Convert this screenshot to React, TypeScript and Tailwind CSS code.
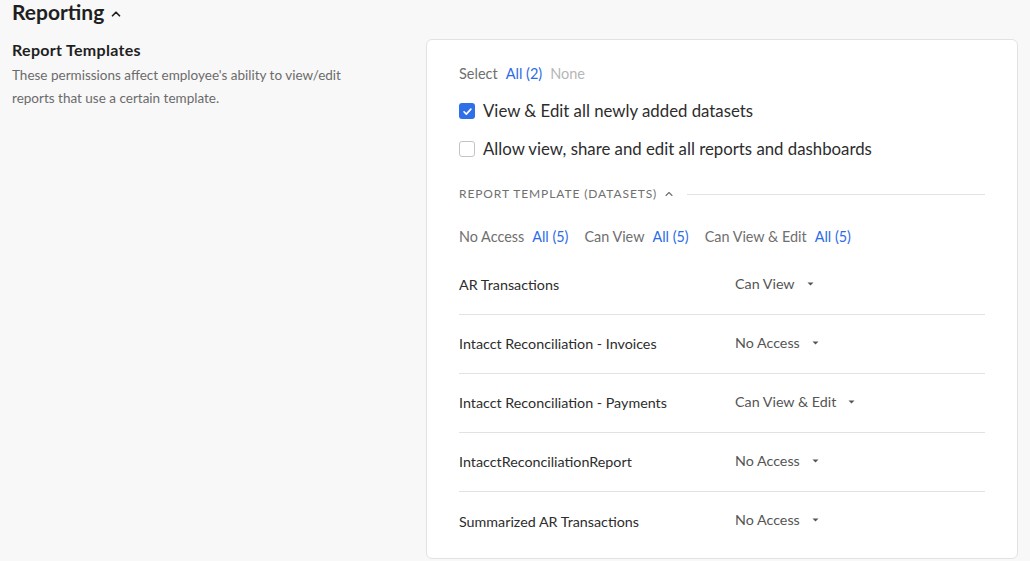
import { ChevronUp } from "lucide-react";

const font = { fontFamily: "Lato, 'Open Sans', sans-serif" };

const rows = [
  { name: "AR Transactions", access: "Can View" },
  { name: "Intacct Reconciliation - Invoices", access: "No Access" },
  { name: "Intacct Reconciliation - Payments", access: "Can View & Edit" },
  { name: "IntacctReconciliationReport", access: "No Access" },
  { name: "Summarized AR Transactions", access: "No Access" },
];

function Checkbox({ checked }: { checked: boolean }) {
  if (checked) {
    return (
      <span className="flex h-4 w-4 items-center justify-center rounded-[3px] bg-[#2f6fe8]">
        <svg width="11" height="11" viewBox="0 0 12 12" fill="none">
          <path d="M2.2 6.3l2.5 2.5 5-5.4" stroke="white" strokeWidth="1.8" strokeLinecap="round" strokeLinejoin="round" />
        </svg>
      </span>
    );
  }
  return <span className="h-4 w-4 rounded-[3px] border border-[#c4c4c4] bg-white" />;
}

function Caret() {
  return (
    <svg width="7" height="4" viewBox="0 0 7 4" className="ml-3">
      <path d="M0.5 0.5h6L3.5 3.5z" fill="#555" />
    </svg>
  );
}

export default function App() {
  return (
    <div className="min-h-[561px] bg-[#f8f8f8] px-3 text-[#2d2d2d]" style={font}>
      {/* Section heading */}
      <div className="flex h-6 items-center gap-[5px]">
        <h1 className="text-[21px] font-bold leading-6 text-[#1f1f1f]">Reporting</h1>
        <ChevronUp size={14} strokeWidth={3} className="mt-1 text-[#1f1f1f]" />
      </div>

      <div className="mt-[15px] flex">
        {/* Left description */}
        <div className="w-[414px] shrink-0 pt-px">
          <h2 className="text-[16px] font-bold leading-5 tracking-[0.3px] text-[#1f1f1f]">Report Templates</h2>
          <p className="mt-1 w-[340px] text-[13.5px] leading-[23px] text-[#6b6b6b]">
            These permissions affect employee's ability to view/edit reports that use a certain template.
          </p>
        </div>

        {/* Card */}
        <div className="flex-1 rounded-md border border-[#e2e2e2] bg-white px-8 pb-[7px] pt-6">
          <div className="flex h-5 items-center gap-2 text-[14.5px]">
            <span className="text-[#6f6f6f]">Select</span>
            <span className="text-[#2c6ce6]">All (2)</span>
            <span className="text-[#b6b6b6]">None</span>
          </div>

          <label className="mt-[15px] flex h-6 items-center gap-2 text-[16.8px]">
            <Checkbox checked />
            <span>View &amp; Edit all newly added datasets</span>
          </label>
          <label className="mt-[14px] flex h-6 items-center gap-2 text-[16.8px]">
            <Checkbox checked={false} />
            <span>Allow view, share and edit all reports and dashboards</span>
          </label>

          {/* Datasets header */}
          <div className="mt-[23px] flex h-5 items-center text-[12px] tracking-[0.9px] text-[#707070]">
            <span>REPORT TEMPLATE (DATASETS)</span>
            <ChevronUp size={12} strokeWidth={2.2} className="ml-[6px]" />
            <div className="ml-3 h-px flex-1 bg-[#e2e2e2]" />
          </div>

          <div className="mt-[23px] flex h-5 items-center gap-4 text-[14.4px]">
            <div className="flex gap-2">
              <span className="text-[#6f6f6f]">No Access</span>
              <span className="text-[#2c6ce6]">All (5)</span>
            </div>
            <div className="flex gap-2">
              <span className="text-[#6f6f6f]">Can View</span>
              <span className="text-[#2c6ce6]">All (5)</span>
            </div>
            <div className="flex gap-2">
              <span className="text-[#6f6f6f]">Can View &amp; Edit</span>
              <span className="text-[#2c6ce6]">All (5)</span>
            </div>
          </div>

          <div className="mt-[9px]">
            {rows.map((r, i) => (
              <div
                key={r.name}
                className={
                  "flex h-[59px] items-center text-[14.3px] " +
                  (i < rows.length - 1 ? "border-b border-[#e2e2e2]" : "")
                }
              >
                <span className="w-[276px] shrink-0 text-[#2d2d2d]">{r.name}</span>
                <span className="flex items-center pb-[3px] text-[#555]">
                  {r.access}
                  <Caret />
                </span>
              </div>
            ))}
          </div>
        </div>
      </div>
    </div>
  );
}
